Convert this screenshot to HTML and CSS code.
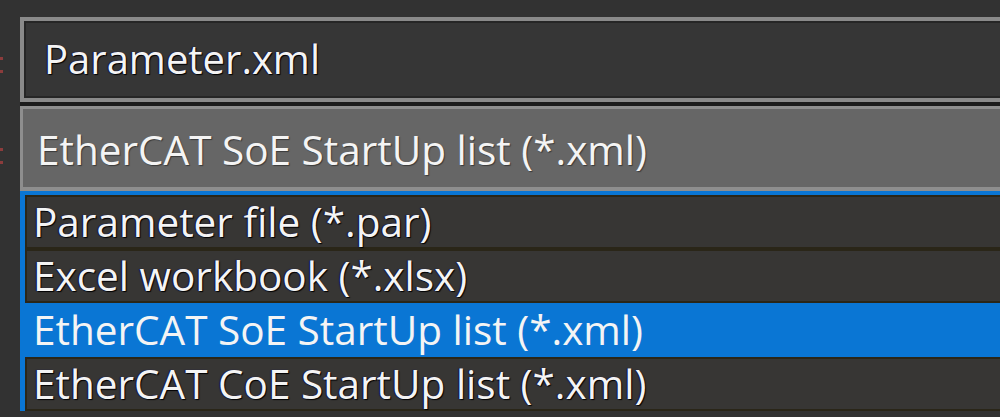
FILE: index.html
```html
<!DOCTYPE html>
<html lang="en">
<head>
    <meta charset="UTF-8">
    <title>Save as</title>
    <link rel="stylesheet" href="styles.css">
</head>
<body>
    <div class="dialog">
        <div class="gutter">
            <span class="mark mark-name"></span>
            <span class="mark mark-type"></span>
        </div>
        <div class="fields">
            <div class="filename">Parameter.xml</div>
            <div class="filetype">EtherCAT SoE StartUp list (*.xml)</div>
            <ul class="type-list">
                <li class="type-item">Parameter file (*.par)</li>
                <li class="type-item">Excel workbook (*.xlsx)</li>
                <li class="type-item selected">EtherCAT SoE StartUp list (*.xml)</li>
                <li class="type-item">EtherCAT CoE StartUp list (*.xml)</li>
            </ul>
        </div>
    </div>
</body>
</html>
```

FILE: styles.css
```css
body {
    margin: 0;
    background-color: #323232;
    font-family: "Open Sans", "Noto Sans", sans-serif;
    color: #f4f4f4;
    overflow: hidden;
    height: 417px;
}

.dialog {
    display: flex;
    padding-top: 17px;
}

/* label colons, cut off at the window edge */
.gutter {
    width: 20px;
    flex: none;
    display: flex;
    flex-direction: column;
}

.mark {
    display: block;
    width: 3px;
    height: 16px;
    background:
        linear-gradient(#8c3c3c, #8c3c3c) 0 0 / 3px 3px no-repeat,
        linear-gradient(#8c3c3c, #8c3c3c) 0 13px / 3px 3px no-repeat;
}

.mark-name {
    margin-top: 40px;
}

.mark-type {
    margin-top: 75px;
}

.fields {
    width: 1000px;
    flex: none;
}

.filename {
    height: 77px;
    border: 4px solid #8a8a8a;
    box-shadow: inset 0 0 0 2px #262626;
    background-color: #363636;
    padding-left: 20px;
    font-size: 40px;
    line-height: 76px;
    text-shadow: 1px 1px 1px #000, -1px 0 1px #10105a;
}

.filetype {
    margin-top: 4px;
    height: 78px;
    border: 3px solid #8e8e8e;
    border-bottom-width: 4px;
    box-shadow: 0 -4px 0 #1b1b1b;
    background-color: #666;
    padding-left: 14px;
    font-size: 40.5px;
    line-height: 82px;
    text-shadow: 1px 1px 1px #3a3a3a;
}

.type-list {
    list-style-type: none;
    margin: 0;
    padding: 0;
    border: 4px solid #0a76d4;
    border-left-width: 5px;
    border-right: none;
    border-bottom: none;
}

.type-item {
    height: 54px;
    padding-left: 8px;
    background-color: #373634;
    box-shadow: inset 0 0 0 2px #2a2618;
    font-size: 40.5px;
    line-height: 54px;
    text-shadow: 1px 1px 1px #000, -1px 0 1px #10105a;
}

.type-item.selected {
    background-color: #0a76d4;
    box-shadow: none;
    margin-left: -5px;
    padding-left: 13px;
    text-shadow: none;
}
```
